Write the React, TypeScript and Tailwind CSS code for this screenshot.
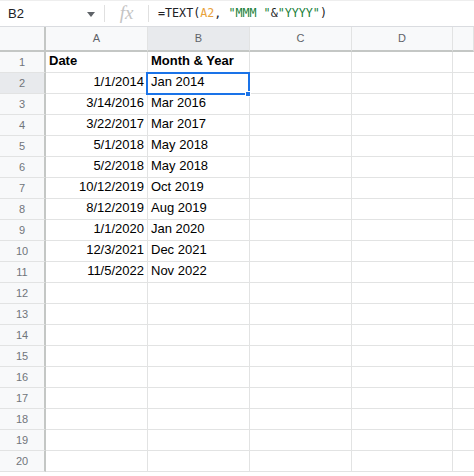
const rows: [string, string][] = [
  ["1/1/2014", "Jan 2014"],
  ["3/14/2016", "Mar 2016"],
  ["3/22/2017", "Mar 2017"],
  ["5/1/2018", "May 2018"],
  ["5/2/2018", "May 2018"],
  ["10/12/2019", "Oct 2019"],
  ["8/12/2019", "Aug 2019"],
  ["1/1/2020", "Jan 2020"],
  ["12/3/2021", "Dec 2021"],
  ["11/5/2022", "Nov 2022"],
];

const cols = ["A", "B", "C", "D", ""];

function FormulaBar() {
  return (
    <div className="flex h-[27px] items-center border-t border-b border-t-[#eeeeee] border-b-[#dadce0] bg-white">
      <div className="flex w-[104px] items-center justify-between pl-[8px] pr-[9px] text-[13px] text-[#202124]">
        <span>B2</span>
        <svg width="8" height="5" viewBox="0 0 8 5" className="mt-[2px]">
          <path d="M0 0h8L4 5z" fill="#5f6368" />
        </svg>
      </div>
      <div className="h-[17px] w-px bg-[#e0e0e0]" />
      <div className="flex w-[43px] items-center justify-center font-['Liberation_Serif',serif] text-[19px] italic text-[#c4c4c4]">
        fx
      </div>
      <div className="h-[17px] w-px bg-[#e0e0e0]" />
      <div className="pl-[9px] font-['DejaVu_Sans_Mono',monospace] text-[11.7px] text-[#202124] whitespace-pre">
        =TEXT(<span className="text-[#e8a23c]">A2</span>,{" "}
        <span className="text-[#188038]">"MMM "</span>&amp;<span className="text-[#188038]">"YYYY"</span>)
      </div>
    </div>
  );
}

export default function App() {
  const body = Array.from({ length: 20 }, (_, i) => {
    if (i === 0) return ["Date", "Month & Year"];
    return rows[i - 1] ?? ["", ""];
  });

  return (
    <div className="h-[476px] w-[474px] overflow-hidden bg-white font-['Liberation_Sans',Arial,sans-serif]">
      <FormulaBar />
      <div className="relative grid grid-cols-[46px_102px_102px_102px_101px_1fr]">
        <div className="h-[25px] border-r-2 border-b-2 border-[#c4c7c5] bg-[#f8f9fa]" />
        {cols.map((c, i) => (
          <div
            key={i}
            className={`flex h-[25px] items-center justify-center border-r border-b-2 border-r-[#e2e3e3] border-b-[#c4c7c5] text-[11px] text-[#5f6368] ${
              c === "B" ? "bg-[#e8eaed]" : "bg-[#f8f9fa]"
            }`}
          >
            {c}
          </div>
        ))}
        {body.map((r, i) => (
          <Row key={i} n={i + 1} a={r[0]} b={r[1]} bold={i === 0} />
        ))}
        <div className="pointer-events-none absolute left-[146px] top-[45px] h-[23px] w-[104px] border-2 border-[#1a73e8]" />
        <div className="pointer-events-none absolute left-[245px] top-[64px] h-[6px] w-[6px] border border-white bg-[#1a73e8]" />
      </div>
    </div>
  );
}

function Row({ n, a, b, bold }: { n: number; a: string; b: string; bold: boolean }) {
  return (
    <>
      <div
        className={`flex h-[21px] items-center justify-center border-r-2 border-b border-r-[#c4c7c5] border-b-[#e2e3e3] text-[11px] text-[#70757a] ${
          n === 2 ? "bg-[#e8eaed]" : "bg-[#f8f9fa]"
        }`}
      >
        {n}
      </div>
      <div
        className={`flex h-[21px] items-end border-r border-b border-[#e2e3e3] px-[3px] pb-[2px] text-[13px] text-black ${
          bold ? "justify-start font-bold" : "justify-end"
        }`}
      >
        {a}
      </div>
      <div
        className={`flex h-[21px] items-end border-r border-b border-[#e2e3e3] px-[3px] pb-[2px] text-[13px] text-black ${
          bold ? "font-bold" : ""
        }`}
      >
        {b}
      </div>
      <div className="h-[21px] border-r border-b border-[#e2e3e3]" />
      <div className="h-[21px] border-r border-b border-[#e2e3e3]" />
      <div className="h-[21px] border-b border-[#e2e3e3]" />
    </>
  );
}
